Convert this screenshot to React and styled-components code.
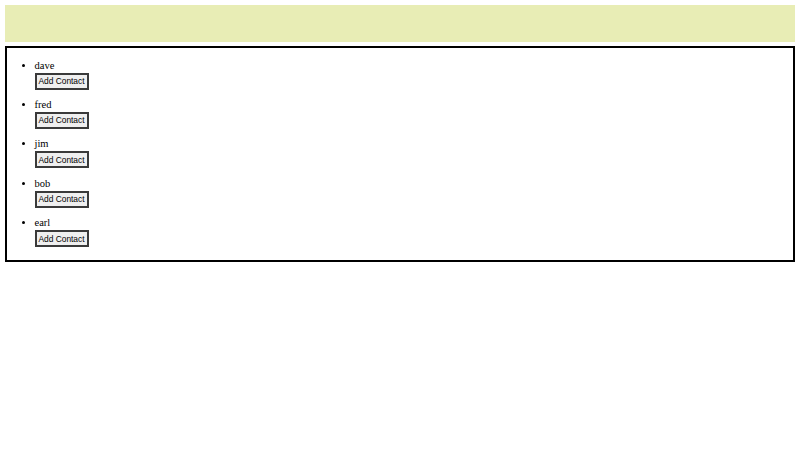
import React from 'react';
import styled, { createGlobalStyle } from 'styled-components';

const GlobalStyle = createGlobalStyle`
  html, body {
    margin: 0;
    padding: 0;
    background: #ffffff;
  }
  body {
    font-family: "Liberation Serif", "Times New Roman", serif;
  }
`;

const PEOPLE = ['dave', 'fred', 'jim', 'bob', 'earl'];

const Page = styled.div`
  padding: 5px;
  display: flex;
  flex-direction: column;
  gap: 4px;
`;

const Header = styled.header`
  height: 37px;
  background-color: #e8edb5;
`;

const ListBox = styled.section`
  border: 2px solid #000000;
  padding: 11.5px 0 3.5px;
`;

const List = styled.ul`
  margin: 0;
  padding-left: 27.5px;
  list-style: disc;
`;

const Item = styled.li`
  font-family: "Liberation Serif", "Times New Roman", serif;
  font-size: 10.5px;
  line-height: 12px;
  color: #000000;
  margin-bottom: 9.4px;
`;

const Name = styled.div`
  height: 12px;
  margin-bottom: 1px;
`;

const AddButton = styled.button`
  display: flex;
  align-items: center;
  justify-content: center;
  box-sizing: border-box;
  width: 54px;
  height: 17px;
  padding: 0;
  margin: 0;
  white-space: nowrap;
  font-family: "Liberation Sans", Arial, sans-serif;
  font-size: 8.4px;
  color: #000000;
  background-color: #efefef;
  border: 2px solid #3a3a3a;
  border-radius: 0;
  cursor: pointer;
`;

function ContactItem({ name }) {
  return (
    <Item>
      <Name>{name}</Name>
      <AddButton type="button">Add Contact</AddButton>
    </Item>
  );
}

export default function App() {
  return (
    <>
      <GlobalStyle />
      <Page>
        <Header />
        <ListBox>
          <List>
            {PEOPLE.map(name => (
              <ContactItem key={name} name={name} />
            ))}
          </List>
        </ListBox>
      </Page>
    </>
  );
}
